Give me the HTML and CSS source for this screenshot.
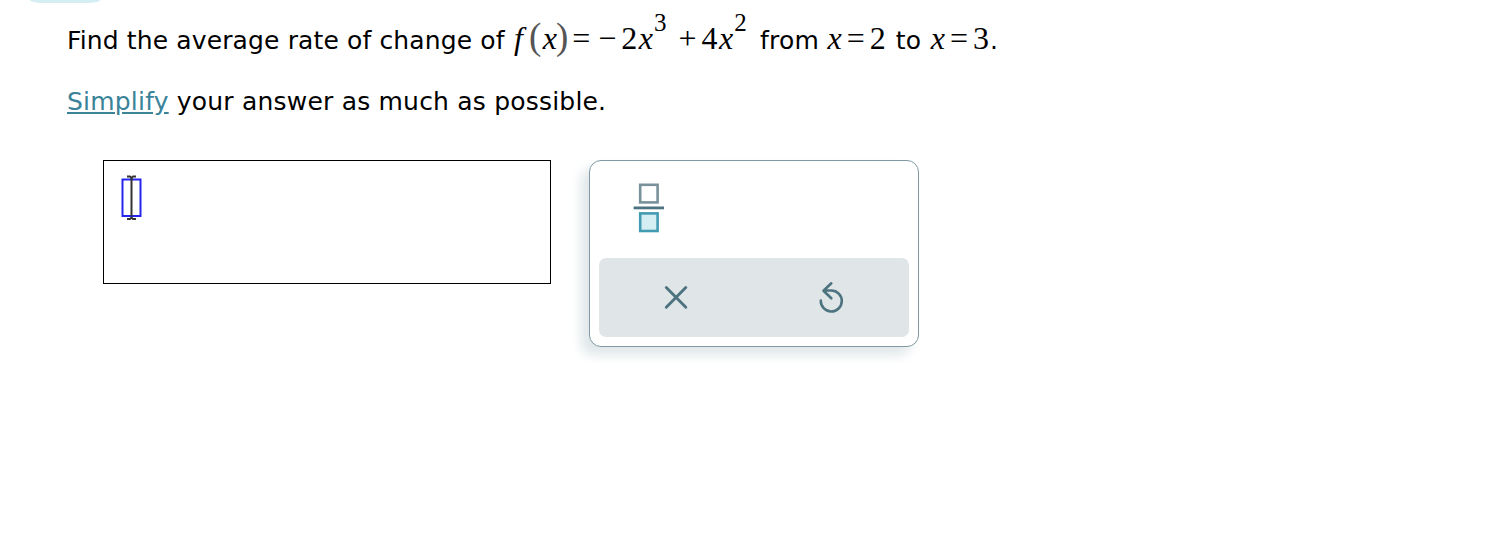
FILE: index.html
```
<!DOCTYPE html>
<html lang="en">
<head>
  <meta charset="UTF-8">
  <meta name="viewport" content="width=device-width, initial-scale=1.0">
  <title>Average rate of change</title>
  <link rel="stylesheet" href="styles.css">
</head>
<body>
  <div class="top-tab"></div>
  <main class="question">
    <p class="line problem">
      <span class="words lead">Find the average rate of change of</span>
      <span class="math function"><i class="f">f</i><span class="paren">(</span><i>x</i><span class="paren close">)</span><span class="eq">=</span><span class="minus">−</span><span>2</span><i>x</i><sup class="cube">3</sup><span class="plus">+</span><span>4</span><i>x</i><sup>2</sup></span>
      <span class="words from">from</span>
      <span class="math"><i>x</i><span class="op">=</span><span>2</span></span>
      <span class="words to">to</span>
      <span class="math"><i>x</i><span class="op">=</span><span>3</span></span><span class="words stop">.</span>
    </p>
    <p class="line hint"><a class="simplify" href="#">Simplify</a> your answer as much as possible.</p>

    <div class="work">
      <div class="answer">
        <svg width="24" height="48" viewBox="0 0 24 48">
          <rect x="2.5" y="6.5" width="18" height="36.5" fill="none" stroke="#2525ee" stroke-width="2"/>
          <path d="M11.500 5v38" fill="none" stroke="#333" stroke-width="2"/>
          <path d="M7 3.500h3l1.500 1.500 1.500-1.500h3M7 46h3l1.500-1.500 1.500 1.500h3" fill="none" stroke="#333" stroke-width="1.8"/>
        </svg>
      </div>
      <div class="palette">
        <button class="fraction" aria-label="Fraction">
          <svg width="32" height="52" viewBox="0 0 32 52">
            <rect x="7.2" y="2.8" width="17.4" height="17.6" fill="#fff" stroke="#78919b" stroke-width="2.6"/>
            <path d="M.6 25.900h30.400" stroke="#4d7380" stroke-width="2.8"/>
            <rect x="7.2" y="31.4" width="17.4" height="17.6" fill="#d5eef3" stroke="#439bb2" stroke-width="2.6"/>
          </svg>
        </button>
        <div class="actions">
          <button aria-label="Clear">
            <svg width="30" height="34" viewBox="0 0 30 34">
              <path d="M4.300 6.500l19.500 19.700M23.800 6.500L4.300 26.200" fill="none" stroke="#4d7380" stroke-width="2.9" stroke-linecap="round"/>
            </svg>
          </button>
          <button aria-label="Undo">
            <svg width="30" height="34" viewBox="0 0 30 34">
              <path d="M14.300 2.300L6.500 9.700l7.800 7.600M6.700 9.500h7.500a10.500 10.500 0 1 1-10.400 10.100" fill="none" stroke="#4d7380" stroke-width="2.6" stroke-linecap="round" stroke-linejoin="round"/>
            </svg>
          </button>
        </div>
      </div>
    </div>
  </main>
</body>
</html>
```

FILE: styles.css
```
body {
  margin: 0;
  background-color: #fff;
  color: #000;
  font-family: Verdana, "DejaVu Sans", sans-serif;
  font-size: 25px;
  letter-spacing: 0.2px;
}
.top-tab {
  width: 70px;
  height: 3px;
  margin-left: 30px;
  background-color: #d5eef3;
  border-radius: 0 0 12px 12px / 0 0 3px 3px;
}
.question {
  box-sizing: border-box;
  min-height: 540px;
  padding: 7px 0 0 67px;
}
.line {
  margin: 0;
  height: 61px;
  line-height: 61px;
  white-space: nowrap;
}
.problem {
  display: flex;
  align-items: baseline;
  line-height: 57px;
}
.lead {
  width: 443px;
  letter-spacing: 0.13px;
}
.math {
  display: flex;
  align-items: baseline;
  font-family: "Liberation Serif", serif;
  font-size: 32px;
  letter-spacing: 0;
}
.math i {
  margin: 0 0 0 1.5px;
}
.function {
  width: 250px;
}
.math .f {
  margin: 0 6px 0 4px;
}
.paren {
  color: #555;
  font-size: 37px;
  line-height: 0;
}
.close {
  margin-left: -1px;
}
.eq {
  margin: 0 8px 0 4px;
}
.minus {
  margin-right: 5px;
}
.math sup {
  position: relative;
  top: -18px;
  margin-left: 1px;
  font-size: 25px;
  line-height: 0;
}
.math .cube {
  margin-right: 12px;
}
.plus {
  margin-right: 5px;
}
.from {
  width: 66px;
}
.op {
  margin: 0 5px;
}
.to {
  margin: 0 8px 0 10px;
}
.stop {
  margin-left: 1px;
}
.simplify {
  color: #3a8399;
  text-decoration: underline;
}
.work {
  display: flex;
  align-items: flex-start;
  gap: 38px;
  padding: 28px 0 0 36px;
}
.answer {
  box-sizing: border-box;
  width: 448px;
  height: 124px;
  padding: 12px 16px;
  border: 1px solid #000;
}
.palette {
  box-sizing: border-box;
  width: 330px;
  height: 187px;
  padding: 21px 9px 9px;
  border: 1px solid #8199a2;
  border-radius: 12px;
  background-color: #fff;
  box-shadow: -8px 8px 12px #dfe7e9;
}
svg {
  display: block;
}
button {
  padding: 0;
  border: 0;
  background: none;
}
.fraction {
  display: block;
  height: 76px;
  padding: 0 0 24px 34px;
}
.actions {
  display: flex;
  height: 79px;
  border-radius: 7px;
  background-color: #e0e6e8;
}
.actions button {
  display: flex;
  flex: 1;
  align-items: center;
  justify-content: center;
}
```
